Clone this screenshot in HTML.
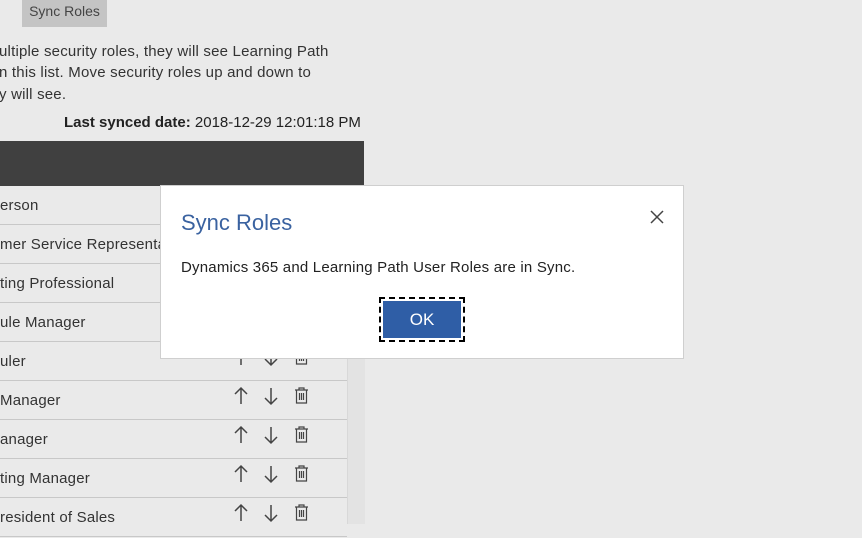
<!DOCTYPE html>
<html><head><meta charset="utf-8"><style>
body{margin:0;width:862px;height:524px;background:#eaeaea;font-family:"Segoe UI","Liberation Sans",sans-serif;overflow:hidden;position:relative;color:#333}
.a{position:absolute;white-space:nowrap}
.btn{left:22px;top:-4px;width:85px;height:31px;background:#c4c4c4;font-size:14px;line-height:30px;text-align:center;color:#444}
.p{left:-1px;font-size:15px;letter-spacing:0.2px;color:#333}
.hdr{left:0;top:141px;width:364px;height:45px;background:#404040}
.sb{left:347px;top:186px;width:17px;height:338px;background:#e3e3e3;border-left:1px solid #d8d8d8}
.row{left:0;width:347px;height:38px;border-bottom:1px solid #c8c8c8;font-size:15px;letter-spacing:0.2px;line-height:40px;color:#333}
.ic{position:absolute;top:5px;left:232px}
.dlg{left:160px;top:185px;width:522px;height:172px;background:#fff;border:1px solid #cfcfcf}
</style></head><body>
<svg width="0" height="0" style="position:absolute"><defs>
<g id="ic" fill="none" stroke="#444" stroke-width="1.5">
<path d="M9 2V18M3 8L9 2L15 8"/>
<path d="M39 2V18M33 12L39 18L45 12"/>
<path d="M63 4H76M67 4V2H72V4M64.5 4V17H74.5V4M67.5 7V14M69.5 7V14M71.5 7V14" stroke-width="1.2"/>
</g></defs></svg>
<div class="a btn">Sync Roles</div>
<div class="a p" style="top:43px">ultiple security roles, they will see Learning Path</div>
<div class="a p" style="top:64px">n this list. Move security roles up and down to</div>
<div class="a p" style="top:86px">y will see.</div>
<div class="a" style="left:64px;top:114px;font-size:15px;color:#222"><b>Last synced date:</b> 2018-12-29 12:01:18 PM</div>
<div class="a hdr"></div>
<div class="a sb"></div>
<div class="a row" style="top:186px">erson</div>
<div class="a row" style="top:225px">mer Service Representative</div>
<div class="a row" style="top:264px">ting Professional</div>
<div class="a row" style="top:303px">ule Manager</div>
<div class="a row" style="top:342px">uler<svg class="ic" width="80" height="20"><use href="#ic"/></svg></div>
<div class="a row" style="top:381px">Manager<svg class="ic" width="80" height="20"><use href="#ic"/></svg></div>
<div class="a row" style="top:420px">anager<svg class="ic" width="80" height="20"><use href="#ic"/></svg></div>
<div class="a row" style="top:459px">ting Manager<svg class="ic" width="80" height="20"><use href="#ic"/></svg></div>
<div class="a row" style="top:498px">resident of Sales<svg class="ic" width="80" height="20"><use href="#ic"/></svg></div>
<div class="a dlg">
 <div class="a" style="left:20px;top:24px;font-size:22px;color:#3a62a0">Sync Roles</div>
 <svg class="a" style="left:489px;top:24px" width="14" height="14"><path d="M1 1L13 13M13 1L1 13" stroke="#444" stroke-width="1.5"/></svg>
 <div class="a" style="left:20px;top:73px;font-size:15px;letter-spacing:0.2px;color:#222">Dynamics 365 and Learning Path User Roles are in Sync.</div>
 <div class="a" style="left:218px;top:111px;width:86px;height:45px;border:2px dashed #000;box-sizing:border-box;padding:2px"><div style="background:#2f5ea6;color:#fff;height:37px;line-height:37px;text-align:center;font-size:17px">OK</div></div>
</div>
</body></html>
